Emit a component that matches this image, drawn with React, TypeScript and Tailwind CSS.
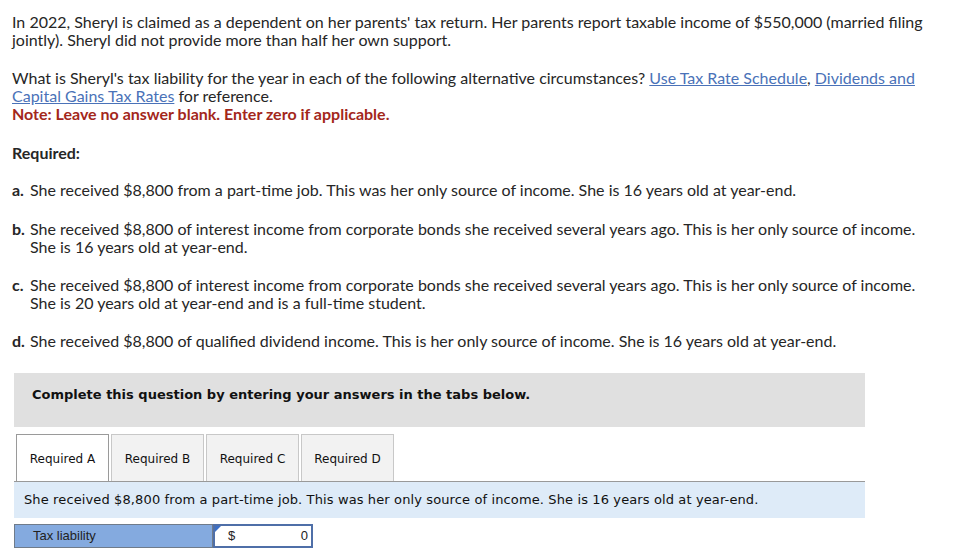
import React from "react";

const tabs = ["Required A", "Required B", "Required C", "Required D"];

export default function App() {
  return (
    <div className="bg-white w-[957px] h-[555px] overflow-hidden pl-3 pt-[13px] text-[#262626]" style={{ fontFamily: "Lato, 'Open Sans', sans-serif" }}>
      <div className="text-[16px] leading-[18px]">
        <p>
          In 2022, Sheryl is claimed as a dependent on her parents' tax return. Her parents report taxable income of $550,000 (married filing
          <br />
          jointly). Sheryl did not provide more than half her own support.
        </p>
        <p className="mt-5">
          What is Sheryl's tax liability for the year in each of the following alternative circumstances?{" "}
          <span className="text-[#4a72b8] underline">Use Tax Rate Schedule</span>,{" "}
          <span className="text-[#4a72b8] underline">Dividends and</span>
          <br />
          <span className="text-[#4a72b8] underline">Capital Gains Tax Rates</span> for reference.
          <br />
          <span className="font-bold text-[#a3271b]">Note: Leave no answer blank. Enter zero if applicable.</span>
        </p>
        <p className="mt-[21px] font-bold">Required:</p>
        <div className="mt-[19px] flex">
          <span className="font-bold w-[18px] shrink-0">a.</span>
          <span>She received $8,800 from a part-time job. This was her only source of income. She is 16 years old at year-end.</span>
        </div>
        <div className="mt-[21px] flex">
          <span className="font-bold w-[18px] shrink-0">b.</span>
          <span>
            She received $8,800 of interest income from corporate bonds she received several years ago. This is her only source of income.
            <br />
            She is 16 years old at year-end.
          </span>
        </div>
        <div className="mt-5 flex">
          <span className="font-bold w-[18px] shrink-0">c.</span>
          <span>
            She received $8,800 of interest income from corporate bonds she received several years ago. This is her only source of income.
            <br />
            She is 20 years old at year-end and is a full-time student.
          </span>
        </div>
        <div className="mt-5 flex">
          <span className="font-bold w-[18px] shrink-0">d.</span>
          <span>She received $8,800 of qualified dividend income. This is her only source of income. She is 16 years old at year-end.</span>
        </div>
      </div>

      <div className="ml-[2px] w-[851px]" style={{ fontFamily: "'DejaVu Sans', Verdana, sans-serif" }}>
        <div className="mt-[23px] h-[54px] bg-[#e0e0e0] pl-[18px] pt-[14px] text-[13px] leading-[16px] font-bold text-[#111]">
          Complete this question by entering your answers in the tabs below.
        </div>
        <div className="mt-[7px] flex gap-[2px] pl-[2px]">
          {tabs.map((t, i) => (
            <div
              key={t}
              className={
                i === 0
                  ? "w-[93px] h-[47px] flex items-center justify-center pt-[1px] text-[12px] text-[#111] bg-white border border-b-0 border-[#9a9a9a]"
                  : "w-[93px] h-[47px] flex items-center justify-center pt-[1px] text-[12px] text-[#111] bg-[#f2f2f2] border border-b-0 border-[#c8c8c8]"
              }
            >
              {t}
            </div>
          ))}
        </div>
        <div className="h-[37px] bg-[#deebf8] border-t border-[#999] pl-[10px] flex items-center text-[13px] tracking-[0.12px] text-[#111]">
          She received $8,800 from a part-time job. This was her only source of income. She is 16 years old at year-end.
        </div>
        <div className="mt-[6px] flex h-[24px]">
          <div className="w-[199px] bg-[#84aadf] border border-[#6f7b8a] flex items-center pl-[18px] text-[13px] text-[#222]" style={{ fontFamily: "'Liberation Sans', Arial, sans-serif" }}>
            Tax liability
          </div>
          <div className="relative w-[100px] bg-white border-2 border-[#4f6fa8] flex items-center justify-between pl-[13px] pr-[3px] text-[13px] text-[#222]" style={{ fontFamily: "'Liberation Sans', Arial, sans-serif" }}>
            <span className="absolute left-0 top-0 w-0 h-0 border-t-[6px] border-r-[6px] border-t-[#3b6fc6] border-r-transparent"></span>
            <span>$</span>
            <span>0</span>
          </div>
        </div>
      </div>
    </div>
  );
}
